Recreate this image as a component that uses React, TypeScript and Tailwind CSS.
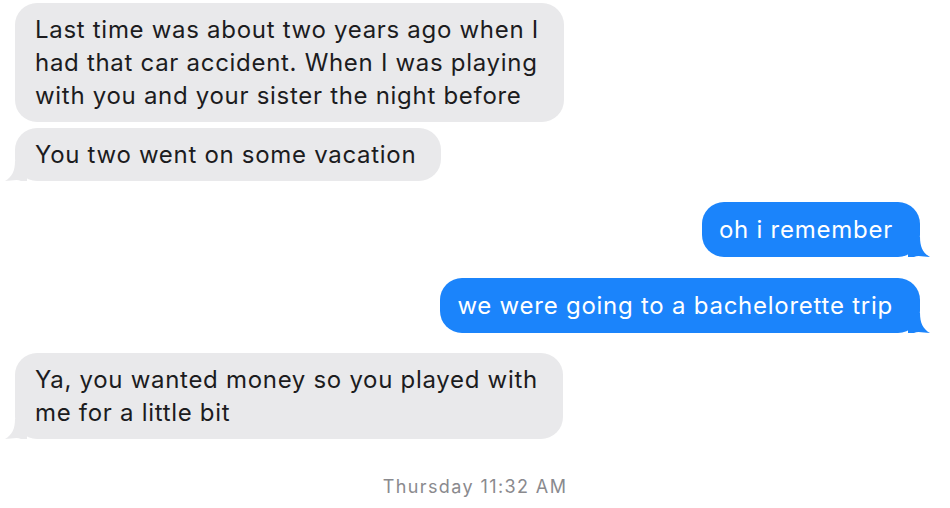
const font = { fontFamily: 'Inter, "Liberation Sans", Arial, sans-serif' };

function Tail({ side, color }: { side: 'left' | 'right'; color: string }) {
  const cls =
    side === 'left'
      ? 'pointer-events-none absolute bottom-0 -left-[10px] h-[20px] w-[22px]'
      : 'pointer-events-none absolute bottom-0 -right-[10px] h-[20px] w-[22px] -scale-x-100';
  return (
    <svg className={cls} viewBox="0 0 22 20" fill={color}>
      <path d="M10 0 H22 V20 H16 C12 18 6 20 0 20 C7 16 10 10 10 0 Z" />
    </svg>
  );
}

function Received({ lines, tail }: { lines: string[]; tail?: boolean }) {
  return (
    <div className="flex justify-start pl-[15px]">
      <div className="relative rounded-[22px] bg-[#e9e9eb] py-[10px] pr-[25px] pl-[20px] text-[24px] leading-[33px] tracking-[0.7px] text-[#1c1c1e]">
        {lines.map((l, i) => (
          <div key={i} className="whitespace-nowrap">
            {l}
          </div>
        ))}
        {tail && <Tail side="left" color="#e9e9eb" />}
      </div>
    </div>
  );
}

function Sent({ text }: { text: string }) {
  return (
    <div className="flex justify-end pr-[30px]">
      <div className="relative rounded-[22px] bg-[#1b84fb] py-[11px] pr-[27px] pl-[17px] text-[24px] leading-[33px] tracking-[0.75px] whitespace-nowrap text-white">
        {text}
        <Tail side="right" color="#1b84fb" />
      </div>
    </div>
  );
}

export default function App() {
  return (
    <div className="h-[508px] w-[950px] overflow-hidden bg-white pt-[3px]" style={font}>
      <div className="flex flex-col">
        <Received
          lines={[
            'Last time was about two years ago when I',
            'had that car accident. When I was playing',
            'with you and your sister the night before',
          ]}
        />
        <div className="h-[6px]" />
        <Received lines={['You two went on some vacation']} tail />
        <div className="h-[21px]" />
        <Sent text="oh i remember" />
        <div className="h-[21px]" />
        <Sent text="we were going to a bachelorette trip" />
        <div className="h-[20px]" />
        <Received lines={['Ya, you wanted money so you played with', 'me for a little bit']} tail />
        <div className="mt-[36px] text-center text-[18px] leading-[24px] tracking-[1.4px] text-[#8a8a8e]">
          Thursday 11:32 AM
        </div>
      </div>
    </div>
  );
}
